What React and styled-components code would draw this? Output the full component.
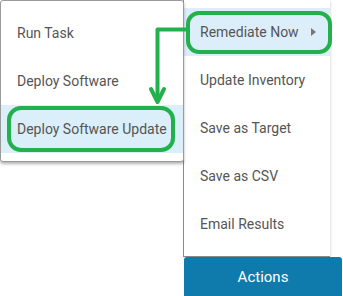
import styled, { createGlobalStyle } from "styled-components";

const GlobalStyle = createGlobalStyle`
  body {
    margin: 0;
    background: #fff;
    font-family: Roboto, "Liberation Sans", sans-serif;
  }
`;

const Page = styled.div`
  position: relative;
  width: 343px;
  height: 296px;
  overflow: hidden;
`;

const Stack = styled.div`
  display: flex;
  flex-direction: column;
  margin-left: 183px;
  width: 160px;
`;

const Menu = styled.ul`
  list-style: none;
  margin: 0;
  padding: 8px 0;
  width: 147px;
  box-sizing: border-box;
  background: #fff;
  border-left: 1px solid #8a8a8a;
  border-bottom: 1px solid #8a8a8a;
  box-shadow: 1px 1px 2px rgba(0, 0, 0, 0.12);
`;

const SubMenu = styled.ul`
  position: absolute;
  left: 0;
  top: 0;
  list-style: none;
  margin: 0;
  padding: 8px 0;
  width: 184px;
  box-sizing: border-box;
  background: #fff;
  border: 1px solid #9a9a9a;
  border-radius: 3px;
  box-shadow: 0 2px 3px rgba(0, 0, 0, 0.3);
`;

const Item = styled.li`
  display: flex;
  align-items: center;
  justify-content: space-between;
  height: 48px;
  padding: 0 16px;
  font-size: 14px;
  color: #555;
  background: ${(p) => (p.$active ? p.$tint || "#daeffa" : "transparent")};
  white-space: nowrap;
`;

const Caret = styled.span`
  width: 0;
  height: 0;
  border-top: 4px solid transparent;
  border-bottom: 4px solid transparent;
  border-left: 5px solid #777;
  margin-right: -2px;
`;

const ActionsButton = styled.button`
  margin-left: 1px;
  height: 39px;
  width: 158px;
  border: none;
  border-radius: 3px 3px 0 0;
  background: #0f7bac;
  color: #fff;
  font-family: Roboto, "Liberation Sans", sans-serif;
  font-size: 15px;
  padding: 0;
`;

const Annotations = styled.svg`
  position: absolute;
  left: 0;
  top: 0;
  pointer-events: none;
`;

const green = "#22b14c";

export default function App() {
  return (
    <Page>
      <GlobalStyle />
      <Stack>
        <Menu>
          <Item $active $tint="#ddeefb">
            Remediate Now <Caret />
          </Item>
          <Item>Update Inventory</Item>
          <Item>Save as Target</Item>
          <Item>Save as CSV</Item>
          <Item>Email Results</Item>
        </Menu>
        <ActionsButton>Actions</ActionsButton>
      </Stack>
      <SubMenu>
        <Item>Run Task</Item>
        <Item>Deploy Software</Item>
        <Item $active>Deploy Software Update</Item>
      </SubMenu>
      <Annotations width="343" height="296" viewBox="0 0 343 296">
        <g fill="none" stroke={green} strokeWidth="4" strokeLinejoin="round">
          <rect x="188" y="13" width="142" height="39" rx="11" />
          <rect x="9" y="108" width="164" height="42" rx="12" />
          <path d="M188 29.5 H157.5 V101" />
          <path d="M151 89 L157.5 102 L164 89" strokeLinecap="round" />
        </g>
      </Annotations>
    </Page>
  );
}
